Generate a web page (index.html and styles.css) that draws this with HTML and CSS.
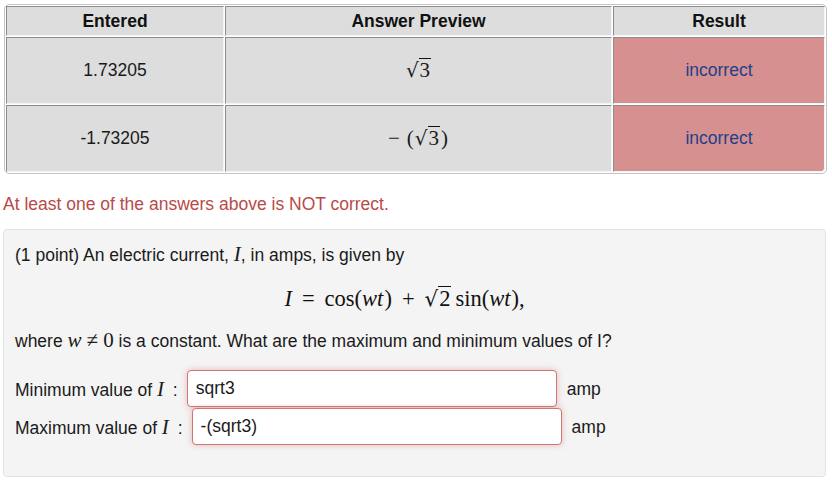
FILE: index.html
```html
<!DOCTYPE html>
<html lang="en">
<head>
    <meta charset="UTF-8">
    <title>Problem</title>
    <link rel="stylesheet" href="styles.css">
</head>
<body>
    <div class="page">
        <table class="attemptResults">
            <tr>
                <th class="col-entered">Entered</th>
                <th class="col-preview">Answer Preview</th>
                <th class="col-result">Result</th>
            </tr>
            <tr>
                <td>1.73205</td>
                <td class="math-cell">
                    <span class="sqrt"><span class="rad">&radic;</span><span class="radicand">3</span></span>
                </td>
                <td class="incorrect">incorrect</td>
            </tr>
            <tr>
                <td>-1.73205</td>
                <td class="math-cell">
                    <span class="op">&minus;</span><span class="paren">(</span><span class="sqrt"><span class="rad">&radic;</span><span class="radicand">3</span></span><span class="paren">)</span>
                </td>
                <td class="incorrect">incorrect</td>
            </tr>
        </table>

        <p class="attempt-message">At least one of the answers above is NOT correct.</p>

        <div class="problem">
            <p class="statement">(1 point) An electric current, <span class="mi">I</span>, in amps, is given by</p>

            <div class="display-math">
                <span class="mi">I</span><span class="mo">=</span><span class="mn">cos(</span><span class="mi">wt</span><span class="mn">)</span><span class="mo">+</span><span class="sqrt"><span class="rad">&radic;</span><span class="radicand">2</span></span><span class="mn fn">sin(</span><span class="mi">wt</span><span class="mn">),</span>
            </div>

            <p class="statement">where <span class="mi">w</span> <span class="mn">&ne; 0</span> is a constant. What are the maximum and minimum values of I?</p>

            <div class="answer-row">
                <label>Minimum value of <span class="mi">I</span> :</label>
                <input type="text" class="answer incorrect-input" value="sqrt3">
                <span class="unit">amp</span>
            </div>
            <div class="answer-row">
                <label>Maximum value of <span class="mi">I</span> :</label>
                <input type="text" class="answer incorrect-input" value="-(sqrt3)">
                <span class="unit">amp</span>
            </div>
        </div>
    </div>
</body>
</html>
```

FILE: styles.css
```css
body {
    font-family: 'Liberation Sans', Arial, sans-serif;
    font-size: 17.5px;
    color: #1a1a1a;
    background-color: #fff;
    margin: 0;
    padding: 0;
}

.page {
    padding: 4px 6px 0 3px;
}

.attemptResults {
    width: 823px;
    margin-left: 1px;
    border: 1px solid #c4c4c4;
    border-radius: 5px;
    border-spacing: 1px;
}

.attemptResults th,
.attemptResults td {
    background-color: #dddddd;
    text-align: center;
    border-style: solid;
    border-width: 1px;
    border-color: #8c8c8c #f4f4f4 #f4f4f4 #8c8c8c;
    padding: 0;
}

.attemptResults th {
    height: 28px;
    font-weight: bold;
    color: #111;
}

.attemptResults td {
    height: 65px;
    color: #1a1a1a;
}

.col-entered {
    width: 216px;
}

.col-preview {
    width: 385px;
}

.attemptResults td.incorrect {
    background-color: #d69090;
    color: #22408a;
}

.attemptResults tr:last-child td:last-child {
    border-bottom-right-radius: 4px;
}

.math-cell {
    font-family: 'Liberation Serif', 'Times New Roman', serif;
    font-size: 21px;
    color: #111;
}

.sqrt {
    display: inline-block;
    white-space: nowrap;
}

.rad {
    font-family: 'DejaVu Serif', serif;
    font-size: 0.95em;
}

.radicand {
    display: inline-block;
    border-top: 1px solid #111;
    line-height: 1.05;
    padding: 0 1px;
    font-family: 'Liberation Serif', 'Times New Roman', serif;
}

.op {
    margin-right: 6px;
}

.paren {
    margin: 0 1px;
}

.attempt-message {
    color: #b94a48;
    margin: 20px 0 15px 0;
    line-height: 20px;
}

.problem {
    background-color: #f4f4f4;
    border: 1px solid #e3e3e3;
    border-radius: 4px;
    padding: 13px 11px 30px 11px;
    color: #1a1a1a;
}

.statement {
    margin: 0;
    line-height: 22px;
}

.mi {
    font-family: 'Liberation Serif', 'Times New Roman', serif;
    font-style: italic;
    font-size: 21px;
}

.mn {
    font-family: 'Liberation Serif', 'Times New Roman', serif;
    font-size: 21px;
}

.mo {
    font-family: 'Liberation Serif', 'Times New Roman', serif;
    margin: 0 10px;
}

.display-math {
    text-align: center;
    font-family: 'Liberation Serif', 'Times New Roman', serif;
    font-size: 22.5px;
    margin: 20px 0 17px 0;
    padding-right: 20px;
    color: #111;
}

.display-math .mi,
.display-math .mn {
    font-size: 22.5px;
}

.display-math .fn {
    margin-left: 4px;
}

.display-math .mi + .mn {
    margin-left: 1px;
}

.answer-row {
    display: flex;
    align-items: center;
}

.statement + .answer-row {
    margin-top: 18px;
}

.answer-row label {
    margin-right: 9px;
}

.answer-row label .mi {
    margin-right: 4px;
}

.answer {
    width: 370px;
    height: 37px;
    box-sizing: border-box;
    font-family: 'Liberation Sans', Arial, sans-serif;
    font-size: 17.5px;
    color: #1a1a1a;
    padding: 0 8px;
    border-radius: 4px;
    background-color: #fff;
    margin: 0 0 1px 0;
}

.incorrect-input {
    border: 1px solid #d07572;
    box-shadow: 0 0 6px rgba(210, 110, 110, 0.45);
}

.unit {
    margin-left: 10px;
}
```
